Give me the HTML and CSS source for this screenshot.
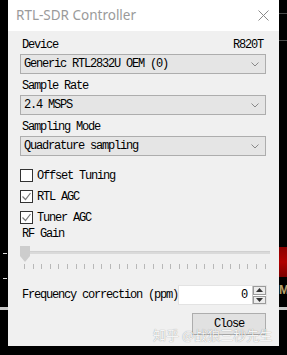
FILE: index.html
```html
<!DOCTYPE html>
<html>
<head>
<meta charset="utf-8">
<link rel="stylesheet" href="styles.css">
</head>
<body>
<div class="backdrop">
  <div class="bg-hline bg-h1"></div>
  <div class="bg-hline bg-h2"></div>
  <div class="bg-red"></div>
  <div class="bg-m">M</div>
  <div class="bg-band"></div>
  <div class="bg-tick bg-t1"></div>
  <div class="bg-tick bg-t2"></div>
</div>
<div class="dialog">
  <div class="titlebar">
    <span class="title">RTL-SDR Controller</span>
    <svg class="close-x" width="11" height="11" viewBox="0 0 11 11"><path d="M0.5 0.5L10.5 10.5M10.5 0.5L0.5 10.5" stroke="#8a8a8a" stroke-width="1" fill="none"/></svg>
  </div>
  <div class="content">
    <div class="label-row"><span>Device</span><span>R820T</span></div>
    <div class="combo"><span>Generic RTL2832U OEM (0)</span><svg class="chev" width="8" height="5" viewBox="0 0 8 5"><path d="M0.5 0.5L4 4L7.5 0.5" stroke="#888" fill="none"/></svg></div>
    <div class="label-row"><span>Sample Rate</span></div>
    <div class="combo"><span>2.4 MSPS</span><svg class="chev" width="8" height="5" viewBox="0 0 8 5"><path d="M0.5 0.5L4 4L7.5 0.5" stroke="#888" fill="none"/></svg></div>
    <div class="label-row"><span>Sampling Mode</span></div>
    <div class="combo"><span>Quadrature sampling</span><svg class="chev" width="8" height="5" viewBox="0 0 8 5"><path d="M0.5 0.5L4 4L7.5 0.5" stroke="#888" fill="none"/></svg></div>
    <div class="checks">
      <div class="check"><span class="box"></span><span>Offset Tuning</span></div>
      <div class="check"><span class="box"><svg width="11" height="11" viewBox="0 0 11 11"><path d="M1.5 5.5L4.5 8.5L9.5 2" stroke="#7a7a7a" stroke-width="1.2" fill="none"/></svg></span><span>RTL AGC</span></div>
      <div class="check"><span class="box"><svg width="11" height="11" viewBox="0 0 11 11"><path d="M1.5 5.5L4.5 8.5L9.5 2" stroke="#7a7a7a" stroke-width="1.2" fill="none"/></svg></span><span>Tuner AGC</span></div>
    </div>
    <div class="gain-label">RF Gain</div>
    <div class="slider">
      <div class="track"></div>
      <div class="thumb"></div>
      <div class="ticks"><i></i><i></i><i></i><i></i><i></i><i></i><i></i><i></i><i></i><i></i><i></i><i></i><i></i><i></i><i></i><i></i><i></i><i></i><i></i><i></i><i></i><i></i><i></i><i></i><i></i><i></i><i></i><i></i><i></i></div>
    </div>
    <div class="freq-row">
      <span class="freq-label">Frequency correction (ppm)</span>
      <div class="spin">
        <span class="spin-val">0</span>
        <div class="spin-btns">
          <span class="sb"><svg width="7" height="4" viewBox="0 0 7 4"><path d="M3.5 0L7 4H0Z" fill="#333"/></svg></span>
          <span class="sb"><svg width="7" height="4" viewBox="0 0 7 4"><path d="M0 0H7L3.5 4Z" fill="#333"/></svg></span>
        </div>
      </div>
    </div>
    <div class="btn-row"><div class="close-btn">Close</div></div>
  </div>
</div>
<div class="watermark">知乎 @战狼三秒先生</div>
</body>
</html>
```
FILE: styles.css
```css
html, body {
  margin: 0;
  padding: 0;
}
body {
  width: 287px;
  height: 355px;
  background: #000;
  position: relative;
  overflow: hidden;
  font-family: "Liberation Mono", "DejaVu Sans Mono", monospace;
  font-size: 12px;
  letter-spacing: -1.2px;
  color: #000;
}
.backdrop {
  position: absolute;
  inset: 0;
}
.bg-hline {
  position: absolute;
  left: 279px;
  width: 8px;
  height: 1px;
  background: #4a4a4a;
}
.bg-h1 { top: 13px; }
.bg-h2 { top: 40px; }
.bg-red {
  position: absolute;
  left: 279px;
  top: 247px;
  width: 8px;
  height: 30px;
  background: linear-gradient(#8a0000, #b00000 50%, #7a0000);
}
.bg-m {
  position: absolute;
  left: 279px;
  top: 283px;
  color: #b9a06a;
  font-family: "Liberation Sans", sans-serif;
  font-weight: bold;
  font-size: 12px;
  letter-spacing: 0;
}
.bg-band {
  position: absolute;
  left: 0;
  top: 307px;
  width: 287px;
  height: 3px;
  background: #c8c8c8;
}
.bg-tick {
  position: absolute;
  left: 3px;
  width: 4px;
  height: 1px;
  background: #ddd;
}
.bg-t1 { top: 253px; }
.bg-t2 { top: 278px; }

.dialog {
  position: relative;
  margin-left: 8px;
  width: 271px;
  height: 346px;
  background: #f0f0f0;
  display: flex;
  flex-direction: column;
}
.titlebar {
  height: 31px;
  background: #fff;
  display: flex;
  align-items: center;
  justify-content: space-between;
  padding: 0 10px 0 8px;
  box-sizing: border-box;
}
.title {
  font-family: "Noto Sans", "Open Sans", sans-serif;
  font-size: 13.5px;
  letter-spacing: 0;
  color: #9a9a9a;
  margin-top: -1px;
}
.close-x {
  display: block;
  margin-top: -1px;
}
.content {
  padding: 7px 13px 0 12px;
  display: flex;
  flex-direction: column;
}
.label-row {
  height: 15px;
  line-height: 15px;
  display: flex;
  justify-content: space-between;
  padding: 0 3px 0 2px;
}
.combo {
  margin-top: 1px;
  margin-bottom: 5px;
  height: 20px;
  box-sizing: border-box;
  border: 1px solid #adadad;
  background: #e5e5e5;
  display: flex;
  align-items: center;
  justify-content: space-between;
  padding: 0 6px 0 3px;
}
.chev { display: block; }
.checks {
  margin-top: 4px;
  display: flex;
  flex-direction: column;
}
.check {
  height: 21px;
  display: flex;
  align-items: center;
  gap: 4px;
}
.box {
  width: 13px;
  height: 13px;
  box-sizing: border-box;
  border: 1px solid #333;
  background: #fff;
  display: flex;
  align-items: center;
  justify-content: center;
}
.box svg { display: block; }
.gain-label {
  height: 13px;
  line-height: 13px;
  padding-left: 2px;
}
.slider {
  position: relative;
  margin-top: 5px;
  margin-right: -4px;
  height: 24px;
}
.track {
  position: absolute;
  left: 7px;
  right: 0;
  top: 5px;
  height: 3px;
  background: #dadada;
  border-top: 1px solid #d0d0d0;
  box-sizing: border-box;
}
.thumb {
  position: absolute;
  left: 0;
  top: 0;
  width: 10px;
  height: 16px;
  background: #cdcdcd;
  clip-path: polygon(0 0, 100% 0, 100% 62%, 50% 100%, 0 62%);
}
.ticks {
  position: absolute;
  left: 4px;
  right: 4px;
  top: 18px;
  height: 5px;
  display: flex;
  justify-content: space-between;
}
.ticks i {
  display: block;
  width: 1px;
  height: 5px;
  background: #b8b8b8;
}
.freq-row {
  margin-top: 15px;
  height: 20px;
  display: flex;
  align-items: center;
  justify-content: space-between;
  padding-left: 2px;
}
.freq-label {
  white-space: nowrap;
}
.spin {
  flex: 0 0 89px;
  width: 89px;
  height: 20px;
  box-sizing: border-box;
  background: #fff;
  border: 1px solid #e3e3e3;
  display: flex;
  align-items: center;
}
.spin-val {
  flex: 1;
  text-align: right;
  padding-right: 5px;
}
.spin-btns {
  width: 14px;
  height: 18px;
  display: flex;
  flex-direction: column;
  gap: 1px;
  box-sizing: border-box;
  border-left: 1px solid #c8c8c8;
}
.sb {
  flex: 1;
  display: flex;
  align-items: center;
  justify-content: center;
  background: #ececec;
  border: 1px solid #9a9a9a;
}
.sb svg { display: block; }
.btn-row {
  margin-top: 8px;
  display: flex;
  justify-content: flex-end;
}
.close-btn {
  width: 74px;
  height: 22px;
  box-sizing: border-box;
  background: #e1e1e1;
  border: 1px solid #adadad;
  display: flex;
  align-items: center;
  justify-content: center;
}
.watermark {
  position: absolute;
  left: 153px;
  top: 325px;
  font-family: "Noto Sans CJK SC", sans-serif;
  font-size: 13px;
  letter-spacing: 0;
  color: rgba(255,255,255,0.92);
  text-shadow: 0 0 1px rgba(0,0,0,0.45);
  white-space: nowrap;
}
```
